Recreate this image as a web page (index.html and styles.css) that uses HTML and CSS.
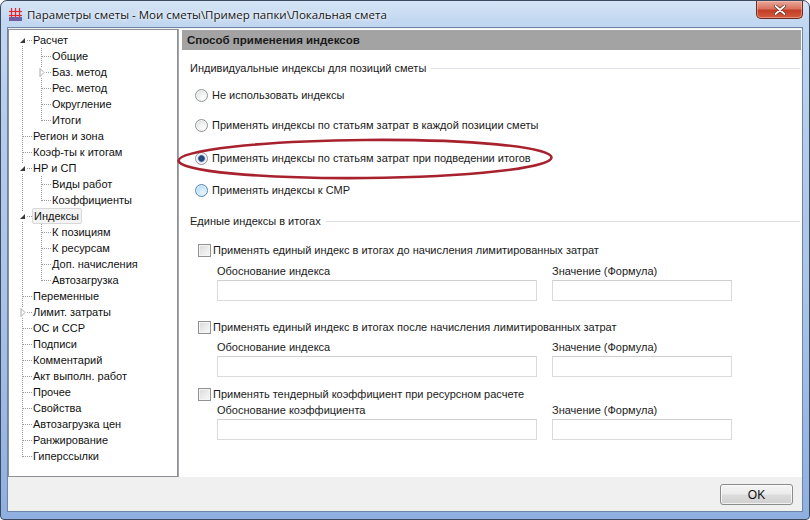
FILE: index.html
```html
<!DOCTYPE html>
<html lang="ru">
<head>
<meta charset="utf-8">
<title>Параметры сметы</title>
<link rel="stylesheet" href="styles.css">
</head>
<body>
<div class="window">
  <div class="titlebar">
    <svg class="app-icon" width="15" height="15" viewBox="0 0 15 15">
      <g stroke="#e02828" stroke-width="1.2">
        <line x1="3.5" y1="1" x2="3.5" y2="14"/>
        <line x1="7.5" y1="1" x2="7.5" y2="14"/>
        <line x1="11.5" y1="1" x2="11.5" y2="14"/>
        <line x1="1" y1="4.5" x2="14" y2="4.5"/>
        <line x1="1" y1="8.5" x2="14" y2="8.5"/>
      </g>
      <rect x="1" y="10" width="13" height="4" fill="#3f6fd0"/>
      <g stroke="#ee3a3a" stroke-width="1.2">
        <line x1="3.5" y1="10" x2="3.5" y2="14"/>
        <line x1="7.5" y1="10" x2="7.5" y2="14"/>
        <line x1="11.5" y1="10" x2="11.5" y2="14"/>
      </g>
    </svg>
    <span class="title">Параметры сметы - Мои сметы\Пример папки\Локальная смета</span>
    <div class="close">
      <svg width="12" height="10" viewBox="0 0 12 10">
        <path d="M1.5 1 L10.5 9 M10.5 1 L1.5 9" stroke="#5a2018" stroke-width="3.2" stroke-linecap="round"/>
        <path d="M1.5 1 L10.5 9 M10.5 1 L1.5 9" stroke="#ffffff" stroke-width="1.8" stroke-linecap="round"/>
      </svg>
    </div>
  </div>

  <div class="client">
    <div class="main">
      <div class="tree">
        <div class="row"><span class="c f"><svg class="exp" width="9" height="9" viewBox="0 0 9 9"><rect width="9" height="9" fill="#fff"/><polygon points="7,2 7,7 2,7" fill="#3a3a3a"/></svg></span><span class="txt">Расчет</span></div>
        <div class="row"><span class="c p"></span><span class="c t"></span><span class="txt">Общие</span></div>
        <div class="row"><span class="c p"></span><span class="c t"><svg class="exp" width="9" height="9" viewBox="0 0 9 9"><rect width="9" height="9" fill="#fff"/><polygon points="3,0.5 7,4.5 3,8.5" fill="#fff" stroke="#a8a8a8" stroke-width="1"/></svg></span><span class="txt">Баз. метод</span></div>
        <div class="row"><span class="c p"></span><span class="c t"></span><span class="txt">Рес. метод</span></div>
        <div class="row"><span class="c p"></span><span class="c t"></span><span class="txt">Округление</span></div>
        <div class="row"><span class="c p"></span><span class="c l"></span><span class="txt">Итоги</span></div>
        <div class="row"><span class="c t"></span><span class="txt">Регион и зона</span></div>
        <div class="row"><span class="c t"></span><span class="txt">Коэф-ты к итогам</span></div>
        <div class="row"><span class="c t"><svg class="exp" width="9" height="9" viewBox="0 0 9 9"><rect width="9" height="9" fill="#fff"/><polygon points="7,2 7,7 2,7" fill="#3a3a3a"/></svg></span><span class="txt">НР и СП</span></div>
        <div class="row"><span class="c p"></span><span class="c t"></span><span class="txt">Виды работ</span></div>
        <div class="row"><span class="c p"></span><span class="c l"></span><span class="txt">Коэффициенты</span></div>
        <div class="row"><span class="c t"><svg class="exp" width="9" height="9" viewBox="0 0 9 9"><rect width="9" height="9" fill="#fff"/><polygon points="7,2 7,7 2,7" fill="#3a3a3a"/></svg></span><span class="txt sel">Индексы</span></div>
        <div class="row"><span class="c p"></span><span class="c t"></span><span class="txt">К позициям</span></div>
        <div class="row"><span class="c p"></span><span class="c t"></span><span class="txt">К ресурсам</span></div>
        <div class="row"><span class="c p"></span><span class="c t"></span><span class="txt">Доп. начисления</span></div>
        <div class="row"><span class="c p"></span><span class="c l"></span><span class="txt">Автозагрузка</span></div>
        <div class="row"><span class="c t"></span><span class="txt">Переменные</span></div>
        <div class="row"><span class="c t"><svg class="exp" width="9" height="9" viewBox="0 0 9 9"><rect width="9" height="9" fill="#fff"/><polygon points="3,0.5 7,4.5 3,8.5" fill="#fff" stroke="#a8a8a8" stroke-width="1"/></svg></span><span class="txt">Лимит. затраты</span></div>
        <div class="row"><span class="c t"></span><span class="txt">ОС и ССР</span></div>
        <div class="row"><span class="c t"></span><span class="txt">Подписи</span></div>
        <div class="row"><span class="c t"></span><span class="txt">Комментарий</span></div>
        <div class="row"><span class="c t"></span><span class="txt">Акт выполн. работ</span></div>
        <div class="row"><span class="c t"></span><span class="txt">Прочее</span></div>
        <div class="row"><span class="c t"></span><span class="txt">Свойства</span></div>
        <div class="row"><span class="c t"></span><span class="txt">Автозагрузка цен</span></div>
        <div class="row"><span class="c t"></span><span class="txt">Ранжирование</span></div>
        <div class="row"><span class="c l"></span><span class="txt">Гиперссылки</span></div>
      </div>

      <div class="panel">
        <div class="panel-header">Способ применения индексов</div>

        <div class="group g1">Индивидуальные индексы для позиций сметы</div>
        <div class="opt r1"><span class="radio"></span><span>Не использовать индексы</span></div>
        <div class="opt r2"><span class="radio"></span><span>Применять индексы по статьям затрат в каждой позиции сметы</span></div>
        <div class="opt r3"><span class="radio checked"></span><span>Применять индексы по статьям затрат при подведении итогов</span></div>
        <div class="opt r4"><span class="radio hover"></span><span>Применять индексы к СМР</span></div>

        <div class="group g2">Единые индексы в итогах</div>

        <div class="opt cb cb1"><span class="check"></span><span>Применять единый индекс в итогах до начисления лимитированных затрат</span></div>
        <div class="fields lbl1"><span class="fl">Обоснование индекса</span><span class="fr">Значение (Формула)</span></div>
        <div class="inputs"><span class="inp wide"></span><span class="inp narrow"></span></div>

        <div class="opt cb cb2"><span class="check"></span><span>Применять единый индекс в итогах после начисления лимитированных затрат</span></div>
        <div class="fields lbl2"><span class="fl">Обоснование индекса</span><span class="fr">Значение (Формула)</span></div>
        <div class="inputs"><span class="inp wide"></span><span class="inp narrow"></span></div>

        <div class="opt cb cb3"><span class="check"></span><span>Применять тендерный коэффициент при ресурсном расчете</span></div>
        <div class="fields lbl3"><span class="fl">Обоснование коэффициента</span><span class="fr">Значение (Формула)</span></div>
        <div class="inputs"><span class="inp wide"></span><span class="inp narrow"></span></div>

        <svg class="ellipse" width="392" height="50" viewBox="0 0 392 50">
          <ellipse cx="192" cy="24" rx="186.5" ry="19" fill="none" stroke="#a8222e" stroke-width="2.6" transform="rotate(-0.5 192 24)"/>
        </svg>
      </div>
    </div>
    <div class="footer">
      <button class="btn">OK</button>
    </div>
  </div>
</div>
</body>
</html>
```

FILE: styles.css
```css
* { box-sizing: border-box; }

html, body {
  margin: 0;
  padding: 0;
  background: #ffffff;
}

body {
  width: 810px;
  height: 520px;
  overflow: hidden;
  font-family: "Liberation Sans", Arial, sans-serif;
  font-size: 11px;
  color: #1a1a1a;
}

.window {
  width: 810px;
  height: 520px;
  border: 1px solid #3b4a60;
  border-radius: 7px 7px 4px 4px;
  padding: 0 6px 7px 6px;
  background: linear-gradient(180deg, #d6e5f6 0px, #c2d7f0 20px, #b5cdeb 120px, #a9c3e7 300px, #8fafe0 520px);
  display: flex;
  flex-direction: column;
}

.titlebar {
  height: 26px;
  display: flex;
  align-items: flex-start;
  padding-left: 1px;
}

.app-icon {
  margin-top: 6px;
  flex: none;
}

.title {
  margin-left: 4px;
  margin-top: 6px;
  font-family: "Open Sans", "Noto Sans", sans-serif;
  font-size: 11.5px;
  line-height: 16px;
  color: #151515;
  text-shadow: 0 0 6px rgba(255,255,255,0.95), 0 0 3px rgba(255,255,255,0.9);
  white-space: nowrap;
}

.close {
  margin-left: auto;
  width: 47px;
  height: 18px;
  border: 1px solid #6b2a22;
  border-top: none;
  border-radius: 0 0 5px 5px;
  background: linear-gradient(180deg, #e8a89a 0%, #d9735f 45%, #c33e26 55%, #d45a3c 100%);
  box-shadow: inset 0 0 0 1px rgba(255,210,200,0.45);
  display: flex;
  align-items: center;
  justify-content: center;
}

.client {
  flex: 1;
  border: 1px solid #6d84a6;
  background: #f0f0f0;
  display: flex;
  flex-direction: column;
}

.main {
  margin-top: 1px;
  height: 448px;
  display: flex;
}

/* ---------- tree ---------- */
.tree {
  width: 170px;
  flex: none;
  background: #ffffff;
  border: 1px solid #8d9096;
  padding: 2px 0 0 4px;
  --vd: repeating-linear-gradient(to bottom, #9c9c9c 0 1px, transparent 1px 2px);
  --hd: repeating-linear-gradient(to right, #9c9c9c 0 1px, transparent 1px 2px);
}

.row {
  height: 16px;
  display: flex;
  align-items: center;
  white-space: nowrap;
}

.c {
  width: 19px;
  height: 16px;
  flex: none;
  display: flex;
  align-items: center;
  background-repeat: no-repeat;
}

.c.p {
  background-image: var(--vd);
  background-position: 9px 0;
  background-size: 1px 16px;
}

.c.t {
  background-image: var(--hd), var(--vd);
  background-position: 10px 8px, 9px 0;
  background-size: 9px 1px, 1px 16px;
}

.c.l {
  background-image: var(--hd), var(--vd);
  background-position: 10px 8px, 9px 0;
  background-size: 9px 1px, 1px 9px;
}

.c.f {
  background-image: var(--hd), var(--vd);
  background-position: 10px 8px, 9px 8px;
  background-size: 9px 1px, 1px 8px;
}

.exp {
  margin-left: 5px;
  display: block;
}

.txt {
  margin-left: 1px;
  line-height: 14px;
  color: #111;
}

.txt.sel {
  margin-left: 0;
  padding: 0 2px 0 1px;
  background: #f3f3f3;
  border: 1px solid #d8d8d8;
  border-radius: 2px;
}

/* ---------- right panel ---------- */
.panel {
  flex: 1;
  position: relative;
  background: #ffffff;
  border-left: 1px solid #a5a5a5;
  padding-top: 1px;
}

.panel-header {
  height: 20px;
  margin: 0 1px 0 3px;
  background: #a3a3a3;
  font-weight: bold;
  font-size: 11.5px;
  line-height: 20px;
  padding-left: 5px;
  color: #1a1a1a;
}

.group {
  height: 16px;
  display: flex;
  align-items: center;
  padding-left: 11px;
  margin-right: 2px;
  white-space: nowrap;
}

.group::after {
  content: "";
  flex: 1;
  margin-left: 5px;
  border-top: 1px solid #dcdfe3;
}

.g1 { margin-top: 10px; }
.g2 { margin-top: 15px; }

.opt {
  height: 16px;
  display: flex;
  align-items: center;
  padding-left: 16px;
  white-space: nowrap;
}

.r1 { margin-top: 11px; }
.r2 { margin-top: 14px; }
.r3 { margin-top: 17px; }
.r4 { margin-top: 16px; }

.radio {
  width: 13px;
  height: 13px;
  flex: none;
  border-radius: 50%;
  border: 1px solid #8f9394;
  margin-right: 4px;
  background: radial-gradient(circle at 65% 70%, #ffffff 0, #f2f2f2 35%, #d6d6d6 100%);
  box-shadow: inset 0 0 0 1px #f8f8f8;
}

.radio.checked {
  background: radial-gradient(circle at 50% 50%, #3a5f94 0, #1d3c6c 2px, #4a6e9e 3px, #b7c8dc 3.6px, #eef1f4 4.4px, #e0e0e0 6px);
}

.radio.hover {
  border-color: #4f86b8;
  background: radial-gradient(circle at 60% 65%, #eaf6fd 0, #c7e6f9 45%, #9fcfef 100%);
  box-shadow: inset 0 0 0 1px #e6f4fc;
}

.cb { padding-left: 19px; }
.cb1 { margin-top: 13px; }
.cb2 { margin-top: 18px; }
.cb3 { margin-top: 9px; }

.check {
  width: 13px;
  height: 13px;
  flex: none;
  border: 1px solid #8f9394;
  margin-right: 2px;
  background: linear-gradient(135deg, #d9d9d9 0%, #ececec 55%, #f9f9f9 100%);
  box-shadow: inset 0 0 0 1px #f4f4f4;
}

.fields {
  height: 16px;
  display: flex;
  align-items: center;
  padding-left: 38px;
  white-space: nowrap;
}

.lbl1 { margin-top: 5px; }
.lbl2 { margin-top: 4px; }
.lbl3 { margin-top: 0; }

.fl { width: 335px; }

.inputs {
  margin-top: 1px;
  padding-left: 38px;
  display: flex;
  gap: 15px;
}

.inp {
  height: 21px;
  background: #ffffff;
  border: 1px solid #dadada;
  border-top-color: #cfcfcf;
}

.inp.wide { width: 320px; }
.inp.narrow { width: 180px; }

.ellipse {
  position: absolute;
  left: -6px;
  top: 106px;
}

/* ---------- footer ---------- */
.footer {
  flex: 1;
  display: flex;
  justify-content: flex-end;
  align-items: flex-start;
  padding: 7px 9px 0 0;
}

.btn {
  width: 73px;
  height: 21px;
  border: 1px solid #8c8c8c;
  border-radius: 3px;
  background: linear-gradient(180deg, #f4f4f4 0%, #ebebeb 48%, #dcdcdc 52%, #d0d0d0 100%);
  box-shadow: inset 0 0 0 1px rgba(255,255,255,0.7);
  font-family: "Liberation Sans", Arial, sans-serif;
  font-size: 12px;
  color: #111;
  padding: 0;
}
```
